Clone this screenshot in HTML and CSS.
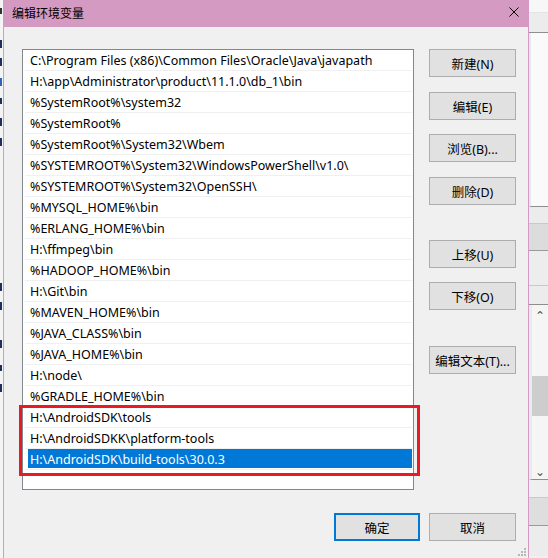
FILE: index.html
```html
<!DOCTYPE html>
<html lang="zh-CN">
<head>
<meta charset="utf-8">
<title>编辑环境变量</title>
<link rel="stylesheet" href="styles.css">
</head>
<body>
<div class="desktop">
  <div class="bg-left">
    <span class="frag f1"></span><span class="frag f2"></span><span class="frag f3"></span>
    <span class="frag f4"></span><span class="frag f5"></span><span class="frag f6"></span>
    <span class="frag f7"></span><span class="frag f8"></span><span class="frag f9"></span>
    <span class="frag f10"></span><span class="frag f11"></span><span class="frag f12"></span>
  </div>
  <div class="bg-right">
    <div class="strip s-top"></div>
    <div class="strip s-gray"></div>
    <div class="strip s-white"></div>
    <div class="strip s-gray2"></div>
    <div class="strip s-gray3"></div>
    <div class="strip s-gray4"></div>
    <div class="strip s-gray5"></div>
    <div class="strip s-scroll">
      <span class="arrow">&#8963;</span>
      <span class="thumb"></span>
      <span class="arrow down">&#8964;</span>
    </div>
    <div class="strip s-gray6"></div>
    <div class="strip s-gray7"></div>
    <div class="strip s-gray8"></div>
  </div>

  <div class="dialog">
    <div class="titlebar">
      <span class="title">编辑环境变量</span>
      <svg class="close" width="10" height="10" viewBox="0 0 10 10"><path d="M0.5 0.5L9.5 9.5M9.5 0.5L0.5 9.5" stroke="#000" stroke-width="1" fill="none"/></svg>
    </div>
    <div class="body">
      <div class="main">
        <div class="listbox">
          <div class="row"><span class="label">C:\Program Files (x86)\Common Files\Oracle\Java\javapath</span></div>
          <div class="row"><span class="label">H:\app\Administrator\product\11.1.0\db_1\bin</span></div>
          <div class="row"><span class="label">%SystemRoot%\system32</span></div>
          <div class="row"><span class="label">%SystemRoot%</span></div>
          <div class="row"><span class="label">%SystemRoot%\System32\Wbem</span></div>
          <div class="row"><span class="label">%SYSTEMROOT%\System32\WindowsPowerShell\v1.0\</span></div>
          <div class="row"><span class="label">%SYSTEMROOT%\System32\OpenSSH\</span></div>
          <div class="row"><span class="label">%MYSQL_HOME%\bin</span></div>
          <div class="row"><span class="label">%ERLANG_HOME%\bin</span></div>
          <div class="row"><span class="label">H:\ffmpeg\bin</span></div>
          <div class="row"><span class="label">%HADOOP_HOME%\bin</span></div>
          <div class="row"><span class="label">H:\Git\bin</span></div>
          <div class="row"><span class="label">%MAVEN_HOME%\bin</span></div>
          <div class="row"><span class="label">%JAVA_CLASS%\bin</span></div>
          <div class="row"><span class="label">%JAVA_HOME%\bin</span></div>
          <div class="row"><span class="label">H:\node\</span></div>
          <div class="row"><span class="label">%GRADLE_HOME%\bin</span></div>
          <div class="row"><span class="label">H:\AndroidSDK\tools</span></div>
          <div class="row"><span class="label">H:\AndroidSDKK\platform-tools</span></div>
          <div class="row selected"><span class="label">H:\AndroidSDK\build-tools\30.0.3</span></div>
        </div>
        <div class="side">
          <button class="btn b-new">新建(N)</button>
          <button class="btn b-edit">编辑(E)</button>
          <button class="btn b-browse">浏览(B)...</button>
          <button class="btn b-del">删除(D)</button>
          <button class="btn b-up">上移(U)</button>
          <button class="btn b-down">下移(O)</button>
          <button class="btn b-text">编辑文本(T)...</button>
        </div>
      </div>
      <div class="footer">
        <button class="btn ok">确定</button>
        <button class="btn cancel">取消</button>
      </div>
    </div>
    <svg class="grip" width="9" height="9" viewBox="0 0 9 9">
      <rect x="6" y="0" width="2" height="2" fill="#b8b8b8"/>
      <rect x="3" y="3" width="2" height="2" fill="#b8b8b8"/>
      <rect x="6" y="3" width="2" height="2" fill="#b8b8b8"/>
      <rect x="0" y="6" width="2" height="2" fill="#b8b8b8"/>
      <rect x="3" y="6" width="2" height="2" fill="#b8b8b8"/>
      <rect x="6" y="6" width="2" height="2" fill="#b8b8b8"/>
    </svg>
  </div>

  <div class="highlight-box"></div>
</div>
</body>
</html>
```

FILE: styles.css
```css
* { box-sizing: border-box; }
html, body { margin: 0; padding: 0; }
body {
  font-family: "Noto Sans", "Noto Sans CJK SC", sans-serif;
  font-size: 12px;
  color: #000;
  background: #f0f0f0;
}
.desktop {
  position: relative;
  width: 548px;
  height: 558px;
  overflow: hidden;
  background: #f0f0f0;
}

/* background window fragments */
.bg-left {
  position: absolute;
  left: 0; top: 0;
  width: 3px; height: 558px;
  background: #f4f4f4;
}
.frag { position: absolute; left: 0; width: 2px; height: 8px; background: #1f2f5c; }
.f1 { top: 8px; height: 6px; background: #333; }
.f2 { top: 40px; }
.f3 { top: 58px; }
.f4 { top: 78px; background: #3060c0; }
.f5 { top: 98px; height: 6px; }
.f6 { top: 118px; }
.f7 { top: 138px; }
.f8 { top: 283px; }
.f9 { top: 302px; }
.f10 { top: 340px; }
.f11 { top: 365px; height: 6px; }
.f12 { top: 384px; }

.bg-right {
  position: absolute;
  left: 529px; top: 0;
  width: 19px; height: 558px;
  display: flex;
  flex-direction: column;
  background: #f0f0f0;
}
.strip { flex: none; }
.s-top { height: 13px; background: #f7f7f7; border-bottom: 1px solid #e3e3e3; }
.s-gray { height: 20px; background: #ececec; border-bottom: 1px solid #8e8e8e; }
.s-white { height: 174px; background: #fafafa; border-left: 2px solid #e9e9e9; border-bottom: 1px solid #8e8e8e; }
.s-gray2 { height: 17px; background: #ececec; border-bottom: 1px solid #c9c9c9; }
.s-gray3 { height: 27px; background: #dcdcdc; border-bottom: 1px solid #9a9a9a; }
.s-gray4 { height: 35px; background: #ededed; border-bottom: 1px solid #c9c9c9; }
.s-gray5 { height: 19px; background: #ececec; border-bottom: 1px solid #8e8e8e; }
.s-scroll {
  height: 175px;
  background: #f5f5f5;
  border-left: 3px solid #ebebeb;
  border-bottom: 1px solid #8e8e8e;
  position: relative;
  display: flex;
  flex-direction: column;
  align-items: center;
}
.s-scroll .arrow { font-size: 12px; line-height: 12px; color: #555; font-family: "DejaVu Sans", sans-serif; margin-top: 5px; }
.s-scroll .thumb { margin-top: 54px; width: 16px; height: 40px; background: #cdcdcd; align-self: flex-end; }
.s-scroll .arrow.down { margin-top: 50px; }
.s-gray6 { height: 18px; background: #efefef; border-bottom: 1px solid #c9c9c9; }
.s-gray7 { height: 28px; background: #dedede; border-bottom: 1px solid #9a9a9a; }
.s-gray8 { height: 30px; background: #ececec; }

/* dialog */
.dialog {
  position: absolute;
  left: 3px; top: 0;
  width: 526px;
  height: 580px;
  background: #f0f0f0;
  border-left: 1px solid #d39bc3;
  border-right: 1px solid #d39bc3;
}
.titlebar {
  height: 27px;
  background: #d49ac2;
  display: flex;
  align-items: center;
  padding: 0 9px 0 8px;
}
.title {
  font-family: "Noto Sans CJK SC", sans-serif;
  font-size: 12px;
  line-height: 14px;
  margin-top: -2px;
}
.close { margin-left: auto; margin-top: -3px; }

.body { padding: 22px 12px 0 18px; }
.main { display: flex; align-items: flex-start; }

.listbox {
  width: 392px;
  height: 441px;
  background: #fff;
  border: 1px solid #82878f;
  padding: 0 0 0 2px;
}
.row {
  height: 21px;
  padding: 0 0 1px 3px;
  border-bottom: 1px solid #f0f0f0;
  margin-right: 1px;
  display: flex;
}
.label {
  flex: 1;
  display: block;
  padding-left: 2px;
  line-height: 21px;
  font-size: 12.5px;
  white-space: nowrap;
  overflow: hidden;
}
.row.selected .label { background: #0078d7; color: #fff; }

.side {
  margin-left: 15px;
  display: flex;
  flex-direction: column;
}
.btn {
  width: 87px;
  height: 28px;
  background: #e1e1e1;
  border: 1px solid #adadad;
  padding: 0;
  font-family: "Noto Sans", "Noto Sans CJK SC", sans-serif;
  font-size: 12.5px;
  color: #000;
  display: flex;
  align-items: center;
  justify-content: center;
}
.b-edit { margin-top: 15px; }
.b-browse { margin-top: 14px; }
.b-del { margin-top: 15px; }
.b-up { margin-top: 35px; }
.b-down { margin-top: 14px; }
.b-text { margin-top: 36px; }

.footer {
  margin-top: 23px;
  display: flex;
  justify-content: flex-end;
  gap: 9px;
}
.ok { width: 86px; border: 2px solid #0078d7; }

.grip { position: absolute; left: 514px; top: 548px; }

.highlight-box {
  position: absolute;
  left: 19px; top: 405px;
  width: 401px; height: 71px;
  border: 3px solid #e81b25;
}
```
